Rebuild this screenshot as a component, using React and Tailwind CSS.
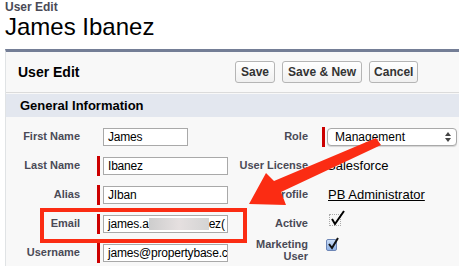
import React from "react";

function Label({ children, w }) {
  return (
    <div
      className={`${w} shrink-0 text-right text-[11px] font-bold leading-[13px] text-[#4a4a56] pt-[2px]`}
    >
      {children}
    </div>
  );
}

function Req() {
  return <div className="w-[3px] h-[20px] -mt-[1px] bg-[#c00] shrink-0" />;
}

function Input({ children, w = "w-[125px]" }) {
  return (
    <div
      className={`${w} h-[18px] border border-[#a9a9a9] bg-white text-[12px] tracking-[-0.2px] leading-[16px] pl-[4px] text-black overflow-hidden whitespace-nowrap shrink-0`}
    >
      {children}
    </div>
  );
}

function Row({ left, right }) {
  return <div className="flex h-[29px] items-start">{left}{right}</div>;
}

export default function App() {
  return (
    <div
      className="relative w-[459px] h-[266px] overflow-hidden bg-white"
      style={{ fontFamily: '"Liberation Sans", Arial, sans-serif' }}
    >
      <div className="pl-[5px] pt-[1px]">
        <div className="text-[12px] font-bold leading-[13px] text-[#4a4a56]">User Edit</div>
        <div className="text-[24px] leading-[26px] text-black">James Ibanez</div>
      </div>
      <div className="mt-[9px] ml-[5px] w-[470px] border-t-[3px] border-t-[#747e96] border-l border-l-[#e0e3e5] bg-[#f8f8f8] h-[300px]">
        <div className="flex items-center h-[41px] border-b border-[#dbdbdb]">
          <div className="pl-[12px] w-[229px] text-[14px] font-bold text-black">User Edit</div>
          <div className="flex gap-[7px] text-[12px] font-bold text-[#333]">
            <div className="h-[22px] px-[5px] flex items-center rounded-[3px] border border-[#b5b5b5] bg-gradient-to-b from-white to-[#f0f0f0]">Save</div>
            <div className="h-[22px] px-[5px] flex items-center rounded-[3px] border border-[#b5b5b5] bg-gradient-to-b from-white to-[#f0f0f0]">Save &amp; New</div>
            <div className="h-[22px] px-[4px] flex items-center rounded-[3px] border border-[#b5b5b5] bg-gradient-to-b from-white to-[#f0f0f0]">Cancel</div>
          </div>
        </div>
        <div className="mt-[1px] h-[23px] bg-[#e3e7ef] flex items-center pl-[14px] text-[13px] font-bold text-black">
          General Information
        </div>
        <div className="pt-[11px]">
          <Row
            left={
              <>
                <Label w="w-[74px]">First Name</Label>
                <div className="w-[23px] shrink-0" />
                <Input w="w-[85px]">James</Input>
                <div className="w-[40px] shrink-0" />
              </>
            }
            right={
              <>
                <Label w="w-[80px]">Role</Label>
                <div className="w-[14px] shrink-0" />
                <Req />
                <div className="w-[2px] shrink-0" />
                <div className="w-[130px] shrink-0 h-[18px] rounded-[4px] border border-[#a9a9a9] bg-white text-[12px] leading-[16px] pl-[7px] flex justify-between items-center pr-[5px] shadow-[0_1px_1px_rgba(0,0,0,0.15)]">
                  <span>Management</span>
                  <svg width="6" height="10" viewBox="0 0 6 10">
                    <path d="M0 4 L3 0 L6 4 Z M0 6 L3 10 L6 6 Z" fill="#444" />
                  </svg>
                </div>
              </>
            }
          />
          <Row
            left={
              <>
                <Label w="w-[74px]">Last Name</Label>
                <div className="w-[17px] shrink-0" />
                <Req />
                <div className="w-[3px] shrink-0" />
                <Input>Ibanez</Input>
              </>
            }
            right={
              <>
                <Label w="w-[80px]">User License</Label>
                <div className="w-[19px] shrink-0" />
                <div className="text-[13px] leading-[16px] pt-[1px] text-black">Salesforce</div>
              </>
            }
          />
          <Row
            left={
              <>
                <Label w="w-[74px]">Alias</Label>
                <div className="w-[17px] shrink-0" />
                <Req />
                <div className="w-[3px] shrink-0" />
                <Input>JIban</Input>
              </>
            }
            right={
              <>
                <Label w="w-[80px]">Profile</Label>
                <div className="w-[20px] shrink-0" />
                <div className="text-[13px] leading-[16px] pt-[1px] text-black underline">PB Administrator</div>
              </>
            }
          />
          <Row
            left={
              <>
                <Label w="w-[74px]">Email</Label>
                <div className="w-[17px] shrink-0" />
                <Req />
                <div className="w-[3px] shrink-0" />
                <Input>
                  <span className="flex items-center">
                    <span>james.a</span>
                    <span className="inline-block w-[60px] h-[12px] bg-gradient-to-r from-[#c8c8c8] via-[#e2dcdc] to-[#cfcfcf] opacity-90" />
                    <span>ez(</span>
                  </span>
                </Input>
              </>
            }
            right={
              <>
                <Label w="w-[80px]">Active</Label>
                <div className="w-[21px] shrink-0" />
                <div className="relative w-[12px] h-[12px] mt-[-1px] border border-dotted border-[#aaa]">
                  <svg className="absolute -top-[5px] left-[1px]" width="14" height="16" viewBox="0 0 14 16">
                    <path d="M1 9 L4 14 L13 1" stroke="#000" strokeWidth="2" fill="none" />
                  </svg>
                </div>
              </>
            }
          />
          <Row
            left={
              <>
                <Label w="w-[74px]">Username</Label>
                <div className="w-[17px] shrink-0" />
                <Req />
                <div className="w-[3px] shrink-0" />
                <Input>james@propertybase.c</Input>
              </>
            }
            right={
              <>
                <div className="w-[80px] shrink-0 text-right text-[11px] font-bold leading-[12px] text-[#4a4a56] -mt-[6px]">
                  Marketing
                  <br />
                  User
                </div>
                <div className="w-[18px] shrink-0" />
                <div className="w-[11px] h-[12px] mt-[-5px] rounded-[2px] border border-[#6d86b6] bg-gradient-to-b from-[#c9dcf5] to-[#8fb2e6] relative">
                  <svg className="absolute -top-[3px] left-[0px]" width="13" height="14" viewBox="0 0 13 14">
                    <path d="M2 7 L5 11 L11 1" stroke="#111" strokeWidth="2" fill="none" />
                  </svg>
                </div>
              </>
            }
          />
        </div>
      </div>
      <svg className="absolute left-0 top-0 pointer-events-none" width="459" height="266">
        <rect x="42" y="210" width="203" height="31" fill="none" stroke="#fb2c13" strokeWidth="4" />
        <polygon
          points="249,204 266,173 274,181 376,138 381,145 281,192 286,205"
          fill="#fb2c13"
        />
      </svg>
    </div>
  );
}
